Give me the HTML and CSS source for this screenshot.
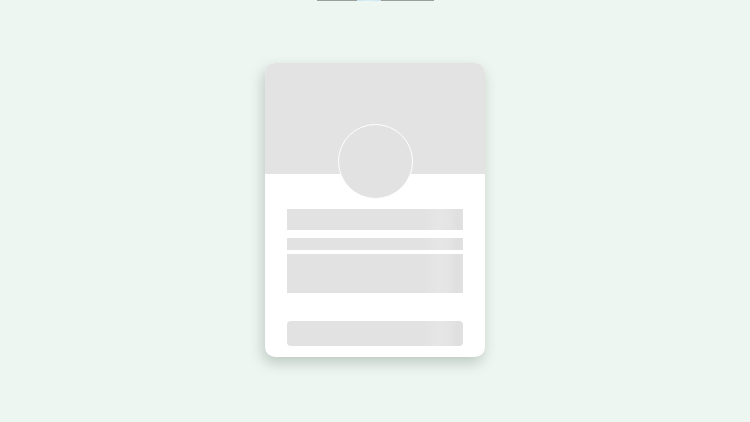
FILE: index.html
```html
<!DOCTYPE html>
<html>
<head>
<meta charset="utf-8">
<link rel="stylesheet" href="styles.css">
</head>
<body>
<div class="loader"><div class="loader-fill"></div></div>
<div class="card">
  <div class="cover"></div>
  <div class="content">
    <div class="avatar"></div>
    <div class="bar bar-title shimmer"></div>
    <div class="bar bar-sub shimmer"></div>
    <div class="bar bar-text shimmer"></div>
    <div class="bar bar-button shimmer"></div>
  </div>
</div>
</body>
</html>
```
FILE: styles.css
```css
html, body {
  margin: 0;
  padding: 0;
  background: #eef6f1;
  font-family: "Liberation Sans", Arial, sans-serif;
  height: 100%;
}
.loader {
  width: 117px;
  height: 1px;
  margin: 0 auto;
  background: #9a9e9c;
  display: flex;
  justify-content: center;
}
.loader-fill {
  width: 24px;
  height: 1px;
  background: linear-gradient(90deg, #c9e4ee, #d6eef6, #c9e4ee);
  margin-left: -12px;
}
.card {
  width: 220px;
  height: 294px;
  margin: 62px auto 0;
  background: #ffffff;
  border-radius: 10px;
  overflow: hidden;
  box-shadow: -2px 6px 14px rgba(60, 90, 75, 0.28);
}
.cover {
  height: 111px;
  background: #e3e3e3;
}
.content {
  padding: 0 22px;
  display: flex;
  flex-direction: column;
}
.avatar {
  width: 73px;
  height: 73px;
  border-radius: 50%;
  background: #e2e2e2;
  border: 1.5px solid #ffffff;
  margin: -50px auto 0;
}
.bar {
  background: #e2e2e2;
}
.shimmer {
  background: linear-gradient(90deg, #e2e2e2 0%, #e2e2e2 78%, #e6e6e6 86%, #e4e4e4 92%, #dfdfdf 97%, #e1e1e1 100%);
}
.bar-title {
  height: 21px;
  margin-top: 10px;
}
.bar-sub {
  height: 12px;
  margin-top: 8px;
}
.bar-text {
  height: 39px;
  margin-top: 4px;
}
.bar-button {
  height: 25px;
  margin-top: 28px;
  border-radius: 4px;
}
```
